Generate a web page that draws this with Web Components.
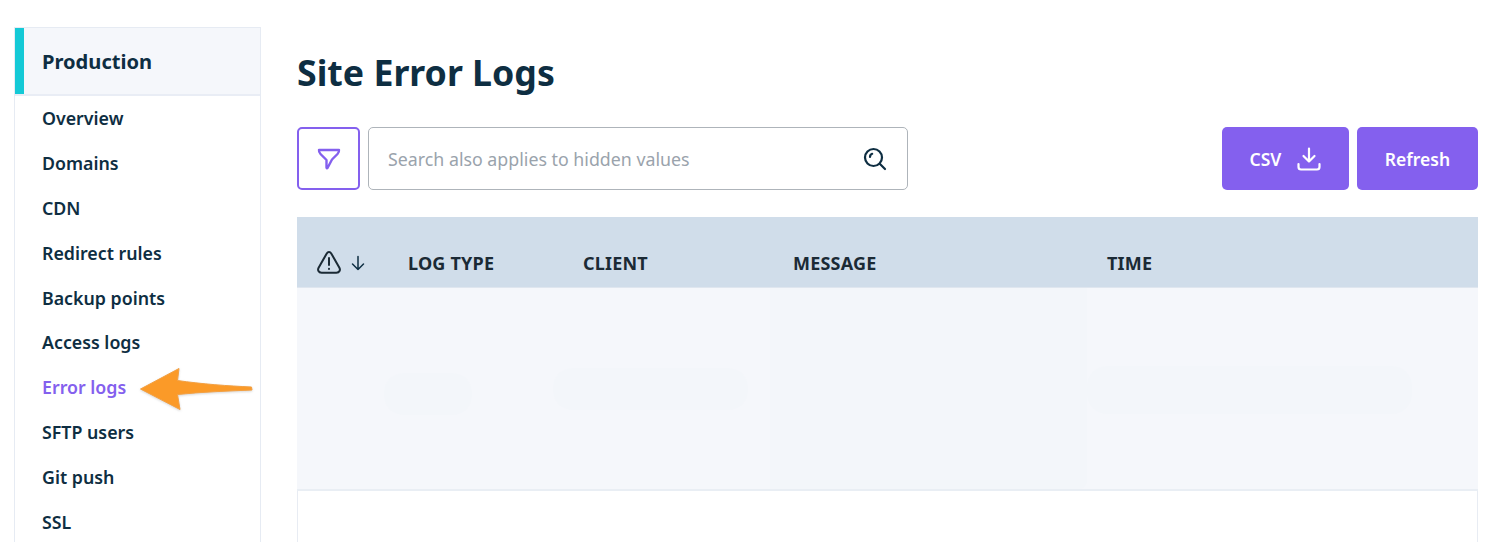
<!DOCTYPE html>
<html lang="en">
<head>
<meta charset="utf-8">
<title>Site Error Logs</title>
<style>
  html, body { margin: 0; height: 542px; overflow: hidden; background: #fff; }
  body { font-family: "Noto Sans", "Open Sans", sans-serif; color: #0e2e42; }
</style>
</head>
<body>
<logs-page></logs-page>
<script>
// Sidebar nav
class SideNav extends HTMLElement {
  constructor() {
    super();
    this.attachShadow({ mode: 'open' });
  }

  connectedCallback() {
    const items = ['Overview', 'Domains', 'CDN', 'Redirect rules', 'Backup points', 'Access logs', 'Error logs', 'SFTP users', 'Git push', 'SSL'];
    const active = this.getAttribute('active');

    this.shadowRoot.innerHTML = `
      <style>
        :host { display: block; width: 247px; box-sizing: border-box; height: 515px; border: 1px solid #e6ebf3; border-bottom: 0; flex: none; position: relative; }
        .head { height: 66px; background: #f5f7fb; box-shadow: inset 9px 0 0 #14c9d6; border-bottom: 2px solid #e9edf5; display: flex; align-items: center; padding-left: 27px; font-size: 20.1px; font-weight: 700; color: #0e2e42; }
        ul { list-style: none; margin: 0; padding: 0; }
        li { height: 44.9px; line-height: 44.9px; padding-left: 27px; font-size: 17.8px; font-weight: 600; color: #0e2e42; white-space: nowrap; }
        li.active { color: #8460ee; }
        svg { position: absolute; left: 124px; top: 339px; filter: drop-shadow(0 1px 1px rgba(90, 90, 90, .25)); }
      </style>
      <div class="head">${this.getAttribute('title')}</div>
      <ul>${items.map(i => `<li class="${i === active ? 'active' : ''}">${i}</li>`).join('')}</ul>
      <svg width="116" height="44" viewBox="0 0 116 44">
        <path d="M1.5 22 40 1.5 38.5 13.500 C62 17 90 19 112.500 20 L113 23 C90 24 62 25 38.500 27.500 L41 42.500 Z" fill="#fb9a28" stroke="#f3a042" stroke-width="1" stroke-linejoin="round"/>
      </svg>
    `;
  }
}
customElements.define('side-nav', SideNav);

// Search box
class SearchBox extends HTMLElement {
  constructor() {
    super();
    this.attachShadow({ mode: 'open' });
  }

  connectedCallback() {
    this.shadowRoot.innerHTML = `
      <style>
        :host { display: flex; align-items: center; justify-content: space-between; box-sizing: border-box; width: 540px; height: 63px; border: 1px solid #aeb4ba; border-radius: 5px; padding: 0 20px 0 19px; }
        span { color: #9aa3ac; font-size: 17.8px; }
        svg { display: block; }
      </style>
      <span>${this.getAttribute('placeholder')}</span>
      <svg width="24" height="24" viewBox="0 0 24 24" fill="none" stroke="#0e2e42" stroke-width="2.200" stroke-linecap="round">
        <circle cx="10.500" cy="10.500" r="8.500"/>
        <path d="M17 17l5 5M7 10c0-1.500.8-2.700 2.200-3.200"/>
      </svg>
    `;
  }
}
customElements.define('search-box', SearchBox);

// Purple button
class ActionButton extends HTMLElement {
  constructor() {
    super();
    this.attachShadow({ mode: 'open' });
  }

  connectedCallback() {
    this.shadowRoot.innerHTML = `
      <style>
        :host { display: inline-flex; align-items: center; justify-content: center; gap: 16px; box-sizing: border-box; height: 63px; border-radius: 5px; background: #8460ee; color: #fff; font-size: 17.5px; font-weight: 600; }
      </style>
      <slot></slot>
    `;
  }
}
customElements.define('action-button', ActionButton);

// Table with its loading skeleton
class LogTable extends HTMLElement {
  constructor() {
    super();
    this.attachShadow({ mode: 'open' });
  }

  connectedCallback() {
    this.shadowRoot.innerHTML = `
      <style>
        :host { display: block; box-sizing: border-box; width: 1181px; height: 325px; border-left: 1px solid #e8ecf3; border-right: 1px solid #e8ecf3; }
        .cols { display: grid; grid-template-columns: 111px 175px 210px 314px 1fr; margin: 0 -1px; }
        .header { height: 71px; background: #d0ddea; align-items: end; padding-bottom: 12px; box-sizing: border-box; border-bottom: 1px solid #dfe6ef; }
        .th { font-size: 18px; font-weight: 700; letter-spacing: .2px; color: #1b2a35; line-height: 24px; }
        .icons { display: flex; align-items: center; gap: 9px; padding-left: 19px; }
        .row { height: 201px; background: #f5f7fb; border-bottom: 2px solid #e9eef4; box-sizing: content-box; }
        .cell { position: relative; }
        .msg { background: #f3f6fa; border-radius: 0 0 8px 0; margin-left: -23px; margin-right: 20px; }
        .blob { position: absolute; background: #f3f6fa; border-radius: 20px; }
        .b1 { left: -24px; top: 85px; width: 88px; height: 42px; }
        .b2 { left: -30px; top: 80px; width: 195px; height: 42px; }
        .b3 { left: -20px; top: 78px; width: 325px; height: 48px; }
      </style>
      <div class="cols header">
        <div class="icons">
          <svg width="26" height="25" viewBox="0 0 26 25" fill="none" stroke="#1b2a35" stroke-width="2" stroke-linecap="round" stroke-linejoin="round">
            <path d="M13 2c1 0 1.800.7 2.400 1.700l8 14c1.200 2.300.2 5-3 5H5.600c-3.200 0-4.200-2.700-3-5l8-14C11.200 2.700 12 2 13 2z"/>
            <path d="M13 8v7M13 18.700v.3"/>
          </svg>
          <svg width="14" height="16" viewBox="0 0 14 16" fill="none" stroke="#0e2e42" stroke-width="1.500" stroke-linecap="round" stroke-linejoin="round">
            <path d="M7 1.500v13M1.500 9l5.500 5.500L12.500 9"/>
          </svg>
        </div>
        <div class="th">LOG TYPE</div>
        <div class="th">CLIENT</div>
        <div class="th">MESSAGE</div>
        <div class="th">TIME</div>
      </div>
      <div class="cols row">
        <div class="cell"></div>
        <div class="cell"><div class="blob b1"></div></div>
        <div class="cell"><div class="blob b2"></div></div>
        <div class="cell msg"></div>
        <div class="cell"><div class="blob b3"></div></div>
      </div>
    `;
  }
}
customElements.define('log-table', LogTable);

// Whole page
class LogsPage extends HTMLElement {
  constructor() {
    super();
    this.attachShadow({ mode: 'open' });
  }

  connectedCallback() {
    this.shadowRoot.innerHTML = `
      <style>
        :host { display: flex; gap: 36px; padding: 27px 0 0 14px; box-sizing: border-box; height: 542px; }
        main { width: 1181px; flex: none; }
        h1 { margin: 0; height: 100px; padding-top: 21px; box-sizing: border-box; font-size: 35.7px; line-height: 49px; font-weight: 700; color: #0e2e42; }
        .toolbar { display: flex; align-items: center; gap: 8px; height: 63px; margin-bottom: 27px; }
        .filter { width: 63px; height: 63px; box-sizing: border-box; border: 2px solid #8460ee; border-radius: 5px; display: flex; align-items: center; justify-content: center; }
        .spacer { flex: 1; }
        .csv { width: 127px; }
        .refresh { width: 121px; }
        svg { display: block; }
      </style>
      <side-nav title="Production" active="Error logs"></side-nav>
      <main>
        <h1>Site Error Logs</h1>
        <div class="toolbar">
          <div class="filter">
            <svg width="24" height="22" viewBox="0 0 24 22" fill="none" stroke="#8460ee" stroke-width="2.400" stroke-linecap="round" stroke-linejoin="round">
              <path d="M2 2h20c.3 2-.6 3-1.500 4l-5.500 5.500-4.500 8.500c-.5.500-1 .2-1-.5V12L3.500 6C2.500 5 1.800 3.500 2 2z"/>
            </svg>
          </div>
          <search-box placeholder="Search also applies to hidden values"></search-box>
          <div class="spacer"></div>
          <action-button class="csv">CSV
            <svg width="24" height="24" viewBox="0 0 24 24" fill="none" stroke="#fff" stroke-width="2.200" stroke-linecap="round" stroke-linejoin="round">
              <path d="M12 1.500v13M6.500 9l5.500 5.500L17.500 9M1.500 17v3c0 1.500 1 2.500 2.500 2.500h16c1.500 0 2.500-1 2.500-2.500v-3"/>
            </svg>
          </action-button>
          <action-button class="refresh">Refresh</action-button>
        </div>
        <log-table></log-table>
      </main>
    `;
  }
}
customElements.define('logs-page', LogsPage);
</script>
</body>
</html>
